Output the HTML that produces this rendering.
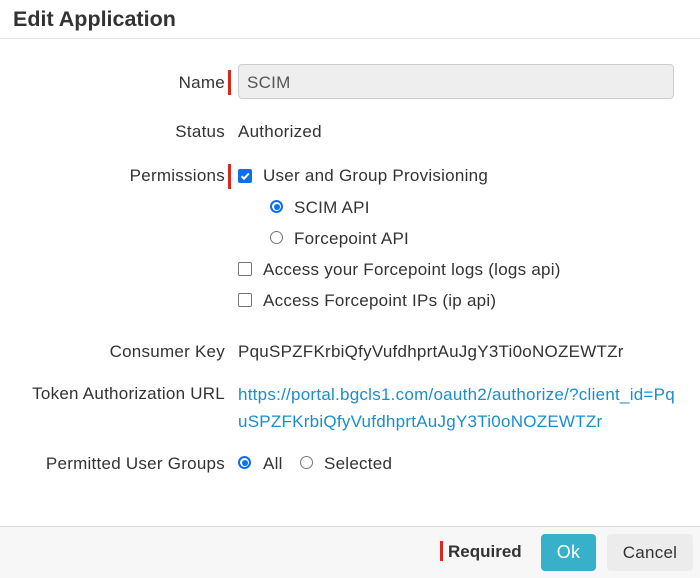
<!DOCTYPE html>
<html><head><style>
body{margin:0;width:700px;height:577px;background:#fff;font-family:"Liberation Sans",Arial,sans-serif;color:#333;font-size:17px;letter-spacing:0.25px;position:relative;overflow:hidden}
.a{position:absolute;white-space:nowrap;line-height:20px}
.l{right:475px;text-align:right}
.bar{position:absolute;width:3px;background:#d9281c}
.cb{position:absolute;width:12px;height:12px;border:1px solid #767676;border-radius:2px;background:#fff}
.cb.on{background:#0b6ff0;border-color:#0b6ff0}
.rd{position:absolute;width:11px;height:11px;border:1px solid #767676;border-radius:50%;background:#fff}
.rd.on{border:2px solid #0b6ff0;width:9px;height:9px}
.rd.on::after{content:"";position:absolute;left:1.5px;top:1.5px;width:6px;height:6px;border-radius:50%;background:#0b6ff0}
a{color:#1a8dd0;text-decoration:none}
</style></head><body>
<div class="a" style="left:13px;top:7px;font-size:21.5px;font-weight:bold;line-height:24px;letter-spacing:0">Edit Application</div>
<div style="position:absolute;left:0;top:38px;width:700px;height:1px;background:#e5e5e5"></div>

<div class="a l" style="top:73px">Name</div>
<div class="bar" style="left:228px;top:70px;height:25px"></div>
<div style="position:absolute;left:238px;top:64px;width:436px;height:35px;background:#eee;border:1px solid #ccc;border-radius:4px;box-sizing:border-box"></div>
<div class="a" style="left:247px;top:73px;color:#555">SCIM</div>

<div class="a l" style="top:122px">Status</div>
<div class="a" style="left:238px;top:122px">Authorized</div>

<div class="a l" style="top:166px">Permissions</div>
<div class="bar" style="left:228px;top:164px;height:25px"></div>
<div class="cb on" style="left:238px;top:169px"><svg width="12" height="12" viewBox="0 0 12 12" style="position:absolute;left:0;top:0"><path d="M2.5 6.2 5 8.7 9.8 3.5" stroke="#fff" stroke-width="2" fill="none"/></svg></div>
<div class="a" style="left:263px;top:166px">User and Group Provisioning</div>
<div class="rd on" style="left:270px;top:200px"></div>
<div class="a" style="left:294px;top:198px">SCIM API</div>
<div class="rd" style="left:270px;top:231px"></div>
<div class="a" style="left:294px;top:229px">Forcepoint API</div>
<div class="cb" style="left:238px;top:262px"></div>
<div class="a" style="left:263px;top:260px">Access your Forcepoint logs (logs api)</div>
<div class="cb" style="left:238px;top:293px"></div>
<div class="a" style="left:263px;top:291px">Access Forcepoint IPs (ip api)</div>

<div class="a l" style="top:342px">Consumer Key</div>
<div class="a" style="left:238px;top:342px">PquSPZFKrbiQfyVufdhprtAuJgY3Ti0oNOZEWTZr</div>

<div class="a l" style="top:384px">Token Authorization URL</div>
<div class="a" style="left:238px;line-height:27px;top:381px"><a>https://portal.bgcls1.com/oauth2/authorize/?client_id=Pq</a><br><a>uSPZFKrbiQfyVufdhprtAuJgY3Ti0oNOZEWTZr</a></div>

<div class="a l" style="top:454px">Permitted User Groups</div>
<div class="rd on" style="left:238px;top:456px"></div>
<div class="a" style="left:263px;top:454px">All</div>
<div class="rd" style="left:300px;top:456px"></div>
<div class="a" style="left:324px;top:454px">Selected</div>

<div style="position:absolute;left:0;top:526px;width:700px;height:51px;background:#f7f7f7;border-top:1px solid #ddd"></div>
<div class="bar" style="left:440px;top:541px;height:20px"></div>
<div class="a" style="left:448px;top:542px;font-weight:bold;letter-spacing:0">Required</div>
<div style="position:absolute;left:541px;top:534px;width:55px;height:37px;background:#37b0c9;border-radius:4px;color:#fff;text-align:center;line-height:37px;font-size:18px">Ok</div>
<div style="position:absolute;left:607px;top:534px;width:86px;height:37px;background:#ececec;border-radius:4px;color:#333;text-align:center;line-height:37px">Cancel</div>
</body></html>
